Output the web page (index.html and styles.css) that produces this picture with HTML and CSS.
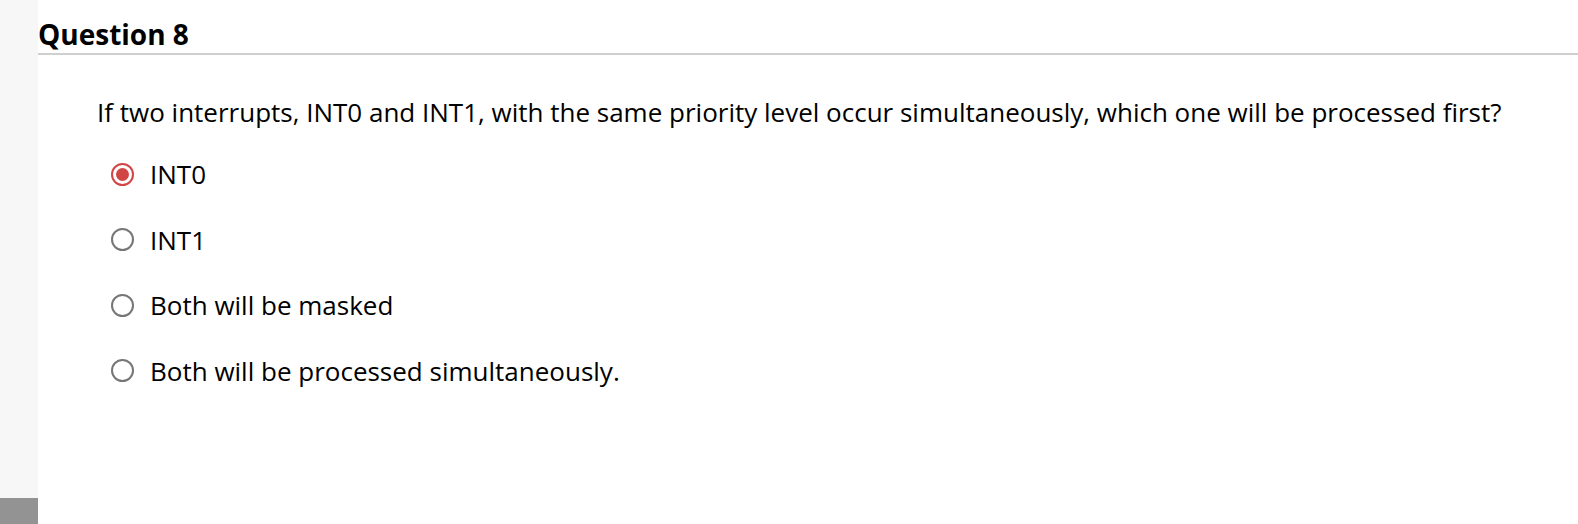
FILE: index.html
```html
<!DOCTYPE html>
<html>
<head>
  <meta charset="utf-8">
  <link rel="stylesheet" href="styles.css">
</head>
<body>
  <div class="page">
    <div class="sidebar">
      <div class="sidebar-fill"></div>
      <div class="sidebar-foot"></div>
    </div>

    <div class="main">
      <div class="question-header">
        <h2>Question 8</h2>
      </div>

      <div class="question-body">
        <p class="question-text">If two interrupts, INT0 and INT1, with the same priority level occur simultaneously, which one will be processed first?</p>

        <div class="answers">
          <label class="answer">
            <span class="radio checked"></span>
            <span class="answer-label">INT0</span>
          </label>
          <label class="answer">
            <span class="radio"></span>
            <span class="answer-label">INT1</span>
          </label>
          <label class="answer">
            <span class="radio"></span>
            <span class="answer-label">Both will be masked</span>
          </label>
          <label class="answer">
            <span class="radio"></span>
            <span class="answer-label">Both will be processed simultaneously.</span>
          </label>
        </div>
      </div>
    </div>
  </div>
</body>
</html>
```

FILE: styles.css
```css
body {
  margin: 0;
  font-family: "Open Sans", "Noto Sans", sans-serif;
  background: #fff;
  color: #000;
}

.page {
  display: flex;
  height: 524px;
}

.sidebar {
  width: 38px;
  display: flex;
  flex-direction: column;
}

.sidebar-fill {
  flex: 1;
  background: #f7f7f7;
}

.sidebar-foot {
  height: 26px;
  background: #939393;
}

.main {
  flex: 1;
}

.question-header {
  border-bottom: 2px solid #cfcfcf;
  height: 53px;
  display: flex;
  align-items: flex-end;
}

.question-header h2 {
  margin: 0 0 2px 0;
  font-size: 28px;
  font-weight: 700;
  line-height: 34px;
}

.question-body {
  padding: 0 0 0 59px;
}

.question-text {
  margin: 40px 0 0 0;
  font-size: 26px;
  line-height: 34px;
}

.answers {
  display: flex;
  flex-direction: column;
  gap: 31.5px;
  margin-top: 28px;
  padding-left: 13px;
}

.answer {
  display: flex;
  align-items: center;
  gap: 16px;
  height: 34px;
  font-size: 26px;
}

.radio {
  box-sizing: border-box;
  width: 23px;
  height: 23px;
  margin-left: 1px;
  border: 2px solid #767676;
  border-radius: 50%;
  display: flex;
  align-items: center;
  justify-content: center;
}

.radio.checked {
  border-color: #d14545;
}

.radio.checked::after {
  content: "";
  width: 13px;
  height: 13px;
  border-radius: 50%;
  background: #d14545;
}
```
